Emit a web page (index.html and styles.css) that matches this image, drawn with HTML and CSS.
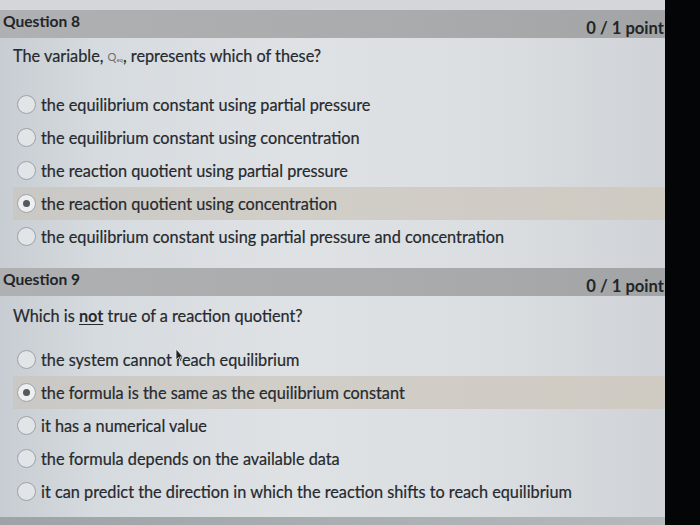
FILE: index.html
```html
<!DOCTYPE html>
<html lang="en">
<head>
<meta charset="utf-8">
<title>Quiz</title>
<link rel="stylesheet" href="styles.css">
</head>
<body>
<div class="frame">
  <main class="screen">
    <section class="question q8">
      <header class="q-head">
        <span class="q-title">Question 8</span>
        <span class="q-points">0 / 1 point</span>
      </header>
      <p class="q-text">The variable, <span class="qeq">Q<sub>eq</sub></span>, represents which of these?</p>
      <ul class="options">
        <li class="option"><span class="radio"></span><span>the equilibrium constant using partial pressure</span></li>
        <li class="option"><span class="radio"></span><span>the equilibrium constant using concentration</span></li>
        <li class="option"><span class="radio"></span><span>the reaction quotient using partial pressure</span></li>
        <li class="option selected"><span class="radio checked"></span><span>the reaction quotient using concentration</span></li>
        <li class="option"><span class="radio"></span><span>the equilibrium constant using partial pressure and concentration</span></li>
      </ul>
    </section>
    <section class="question q9">
      <header class="q-head">
        <span class="q-title">Question 9</span>
        <span class="q-points">0 / 1 point</span>
      </header>
      <p class="q-text">Which is <u class="em">not</u> true of a reaction quotient?</p>
      <ul class="options">
        <li class="option"><span class="radio"></span><span>the system cannot <span class="cursor-host">r<svg class="cursor" width="9" height="14" viewBox="0 0 9 14"><path d="M1 1 L1 12 L3.5 9.5 L5.5 13.5 L7 12.8 L5 9 L8.2 9 Z" fill="#222" stroke="#eee" stroke-width="0.8"/></svg></span>each equilibrium</span></li>
        <li class="option selected"><span class="radio checked"></span><span>the formula is the same as the equilibrium constant</span></li>
        <li class="option"><span class="radio"></span><span>it has a numerical value</span></li>
        <li class="option"><span class="radio"></span><span>the formula depends on the available data</span></li>
        <li class="option"><span class="radio"></span><span>it can predict the direction in which the reaction shifts to reach equilibrium</span></li>
      </ul>
    </section>
    <div class="bottom-strip"></div>
  </main>
  <div class="bezel"></div>
</div>
</body>
</html>
```

FILE: styles.css
```css
html, body {
  margin: 0;
  padding: 0;
  width: 700px;
  height: 525px;
  overflow: hidden;
  background: #050607;
}

.frame {
  display: flex;
  width: 700px;
  height: 525px;
}

.screen {
  width: 665px;
  height: 525px;
  padding-top: 10px;
  box-sizing: border-box;
  display: flex;
  flex-direction: column;
  background: linear-gradient(90deg, #c7cdd2 0%, #d6dbdf 15%, #dfe2e5 45%, #dadee1 75%, #cfd3d7 100%);
  font-family: Lato, "Open Sans", sans-serif;
  color: #26292e;
  -webkit-text-stroke: 0.2px #26292e;
  position: relative;
}

.screen::before {
  content: "";
  position: absolute;
  left: 0;
  top: 0;
  right: 0;
  height: 10px;
  background: #d3d7da;
}

.q-head {
  height: 28px;
  background: linear-gradient(90deg, #aeb0b1 0%, #a9abac 60%, #a2a4a5 100%);
  display: flex;
  justify-content: space-between;
  align-items: flex-start;
  padding: 0 1px 0 3px;
}

.q-title {
  font-size: 15.6px;
  font-weight: 700;
  line-height: 22px;
  color: #222528;
  -webkit-text-stroke: 0;
}

.q-points {
  font-size: 16.6px;
  font-weight: 700;
  line-height: 20px;
  margin-top: 8px;
  color: #222528;
  -webkit-text-stroke: 0;
}

.q-text {
  margin: 0;
  padding: 8px 0 0 13px;
  font-size: 16.3px;
  line-height: 20px;
}

.q9 .q-text {
  padding-top: 10px;
}

.qeq {
  font-size: 11px;
  color: #6c7075;
  -webkit-text-stroke: 0;
  vertical-align: 1px;
}

.qeq sub {
  font-size: 6px;
  vertical-align: -1px;
}

.em {
  font-weight: 700;
  text-underline-offset: 2px;
  -webkit-text-stroke: 0;
}

.options {
  list-style: none;
  margin: 18px 0 0 0;
  padding: 0;
}

.q9 .options {
  margin-top: 17px;
}

.q9 {
  margin-top: 15px;
}

.option {
  height: 33px;
  display: flex;
  align-items: center;
  font-size: 16.3px;
  margin-left: 13px;
  padding-left: 4px;
}

.option.selected {
  background: linear-gradient(90deg, #c9c8c5 0%, #d1cec8 40%, #cfcac2 100%);
}

.radio {
  width: 19px;
  height: 19px;
  border-radius: 50%;
  border: 1px solid #9da2a7;
  background: #e2e5e8;
  box-sizing: border-box;
  margin-right: 5px;
  flex: none;
  display: flex;
  align-items: center;
  justify-content: center;
}

.radio.checked {
  background: #eceeef;
  border-color: #a0a4a8;
}

.radio.checked::after {
  content: "";
  width: 7px;
  height: 7px;
  border-radius: 50%;
  background: #55585c;
}

.cursor-host {
  position: relative;
}

.cursor {
  position: absolute;
  left: -1px;
  top: -2px;
  -webkit-text-stroke: 0;
}

.bottom-strip {
  margin-top: auto;
  height: 8px;
  background: linear-gradient(90deg, #9ea3a7, #b5b9bc);
}

.bezel {
  width: 35px;
  height: 525px;
  background: #040506;
}
```
